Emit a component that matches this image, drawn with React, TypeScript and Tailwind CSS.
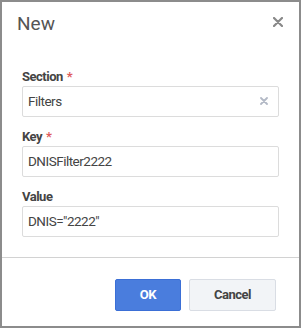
import React from 'react';

const font = { fontFamily: 'Roboto, "Liberation Sans", sans-serif' };

const Field: React.FC<{ label: string; value: string; required?: boolean; clearable?: boolean; first?: boolean }> = ({
  label,
  value,
  required,
  clearable,
  first,
}) => (
  <div className={first ? '' : 'mt-[12px]'}>
    <div className="mb-[1px] h-[16px] text-[13px] leading-[16px] font-bold tracking-[-0.5px] text-[#444]">
      {label}
      {required && <span className="ml-[4px] text-[#e05c5c]">*</span>}
    </div>
    <div className="flex h-[31px] items-center rounded-[2px] border border-[#dcdcdc] bg-white pr-[10px] pl-[5px]">
      <span className="flex-1 text-[13.5px] tracking-[-0.5px] text-[#444]">{value}</span>
      {clearable && (
        <svg width="8" height="8" viewBox="0 0 8 8" className="text-[#b3b9c6]">
          <path d="M1 1L7 7M7 1L1 7" stroke="currentColor" strokeWidth="1.8" strokeLinecap="round" />
        </svg>
      )}
    </div>
  </div>
);

export default function App() {
  return (
    <div
      style={font}
      className="flex h-[328px] w-[301px] flex-col border-2 border-[#8c8c8c] bg-white"
    >
      {/* header */}
      <div className="flex h-[66.5px] items-start justify-between pt-[9.5px] pr-[16px] pl-[15px]">
        <span className="text-[19px] leading-[24px] text-[#555]">New</span>
        <svg width="10" height="10" viewBox="0 0 10 10" className="mt-[5px] text-[#888]">
          <path d="M1 1L9 9M9 1L1 9" stroke="currentColor" strokeWidth="2.2" strokeLinecap="round" />
        </svg>
      </div>

      {/* body */}
      <div className="h-[188px] px-[20px]">
        <Field first label="Section" value="Filters" required clearable />
        <Field label="Key" value="DNISFilter2222" required />
        <Field label="Value" value={'DNIS="2222"'} />
      </div>

      {/* footer */}
      <div className="flex flex-1 justify-end gap-[8px] border-t border-[#d2d2d2] pt-[21px] pr-[23px]">
        <button className="h-[32px] w-[66px] rounded-[2px] border border-[#3b6fd6] bg-[#4a7ddd] text-[13px] font-bold tracking-[-0.3px] text-white">
          OK
        </button>
        <button className="h-[32px] w-[87px] rounded-[2px] border border-[#d9dde4] bg-[#f2f4f7] text-[13px] font-bold tracking-[-0.5px] text-[#444]">
          Cancel
        </button>
      </div>
    </div>
  );
}
